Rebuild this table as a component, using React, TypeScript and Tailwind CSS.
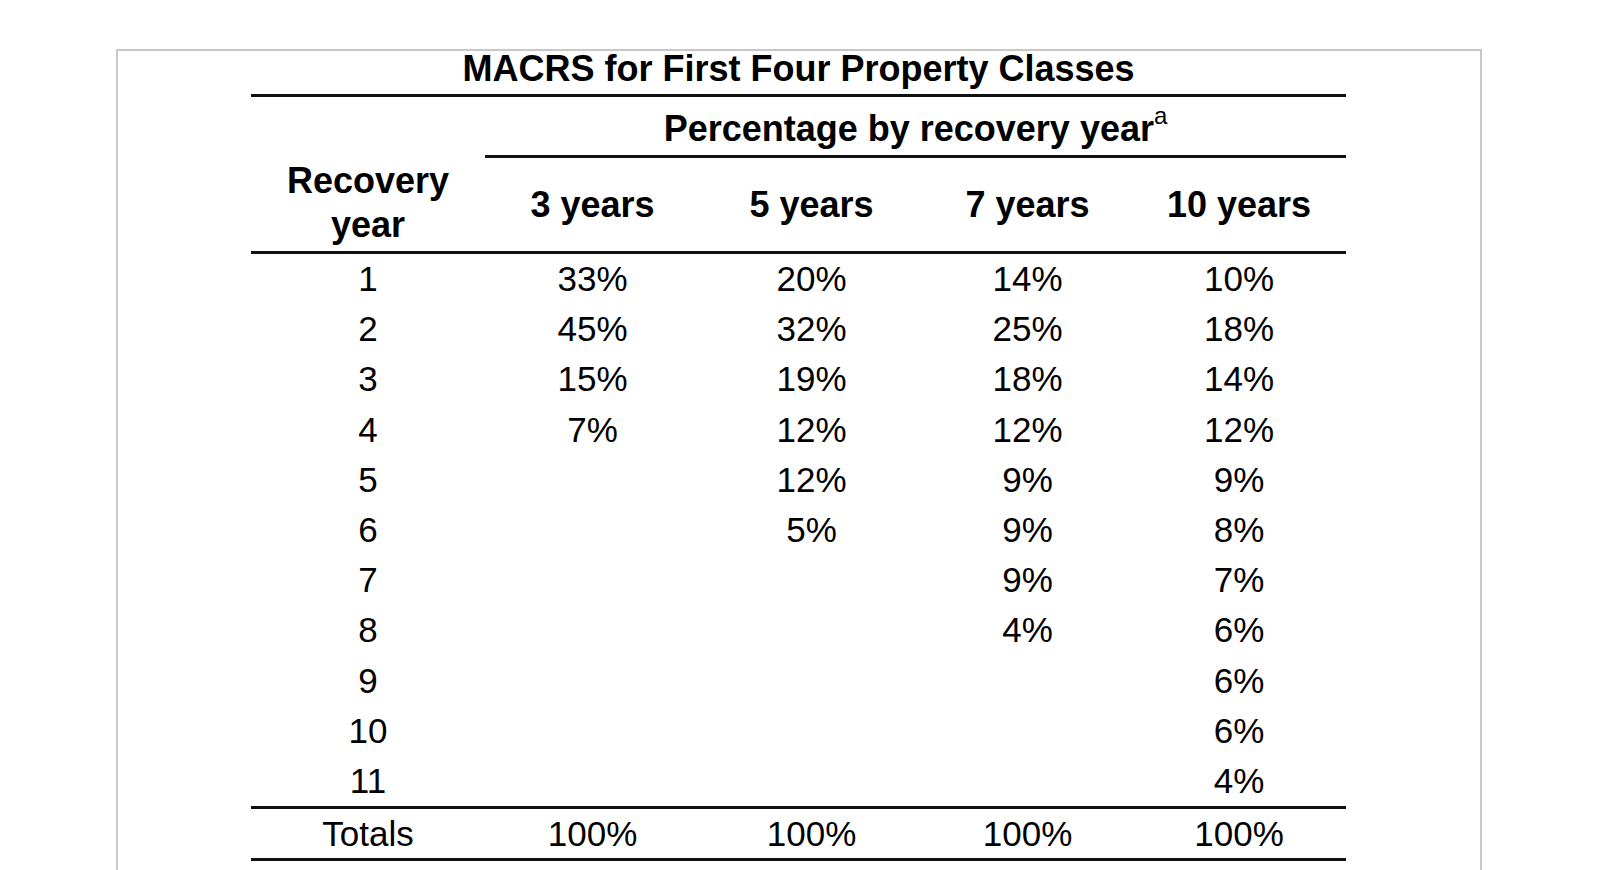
import React from 'react';

const font = { fontFamily: '"Liberation Sans", Arial, Helvetica, sans-serif' };

const columns = ['3 years', '5 years', '7 years', '10 years'];

const rows: string[][] = [
  ['1', '33%', '20%', '14%', '10%'],
  ['2', '45%', '32%', '25%', '18%'],
  ['3', '15%', '19%', '18%', '14%'],
  ['4', '7%', '12%', '12%', '12%'],
  ['5', '', '12%', '9%', '9%'],
  ['6', '', '5%', '9%', '8%'],
  ['7', '', '', '9%', '7%'],
  ['8', '', '', '4%', '6%'],
  ['9', '', '', '', '6%'],
  ['10', '', '', '', '6%'],
  ['11', '', '', '', '4%'],
];

// column widths as measured off the printed table (not quite even)
const cols = 'grid-cols-[234px_215px_223px_209px_1fr]';

const Rule = ({ className = '' }: { className?: string }) => (
  <div className={`h-[3px] bg-[#111] ${className}`} />
);

export default function App() {
  return (
    <div className="h-[870px] w-full overflow-hidden bg-white text-black" style={font}>
      <div className="ml-[116px] mt-[49px] h-[900px] w-[1366px] border-2 border-b-0 border-[#c8c8c8]">
        <div className="ml-[133px] w-[1095px]">
          <div className="h-[36px] text-center text-[36px] font-bold leading-[36px]">
            MACRS for First Four Property Classes
          </div>
          <Rule className="mt-[7px]" />

          <div className="pl-[234px]">
            <div className="pt-[14px] text-center text-[36px] font-bold leading-[36px]">
              Percentage by recovery year
              <sup className="top-[-17px] text-[24px] font-normal">a</sup>
            </div>
            <Rule className="mt-[8px]" />
          </div>

          <div className={`grid h-[93px] ${cols} items-center text-center text-[36px] font-bold`}>
            <div className="-mt-[3px] leading-[44px]">
              Recovery
              <br />
              year
            </div>
            {columns.map((c) => (
              <div key={c} className="leading-[36px]">
                {c}
              </div>
            ))}
          </div>
          <Rule />

          <div className="text-[35px]">
            {rows.map((r) => (
              <div key={r[0]} className={`grid h-[50.2px] ${cols} text-center leading-[50.2px]`}>
                {r.map((cell, i) => (
                  <div key={i}>{cell}</div>
                ))}
              </div>
            ))}
          </div>
          <Rule />

          <div className={`grid h-[49px] ${cols} text-center text-[35px] leading-[49px]`}>
            <div>Totals</div>
            <div>100%</div>
            <div>100%</div>
            <div>100%</div>
            <div>100%</div>
          </div>
          <Rule />
        </div>
      </div>
    </div>
  );
}
